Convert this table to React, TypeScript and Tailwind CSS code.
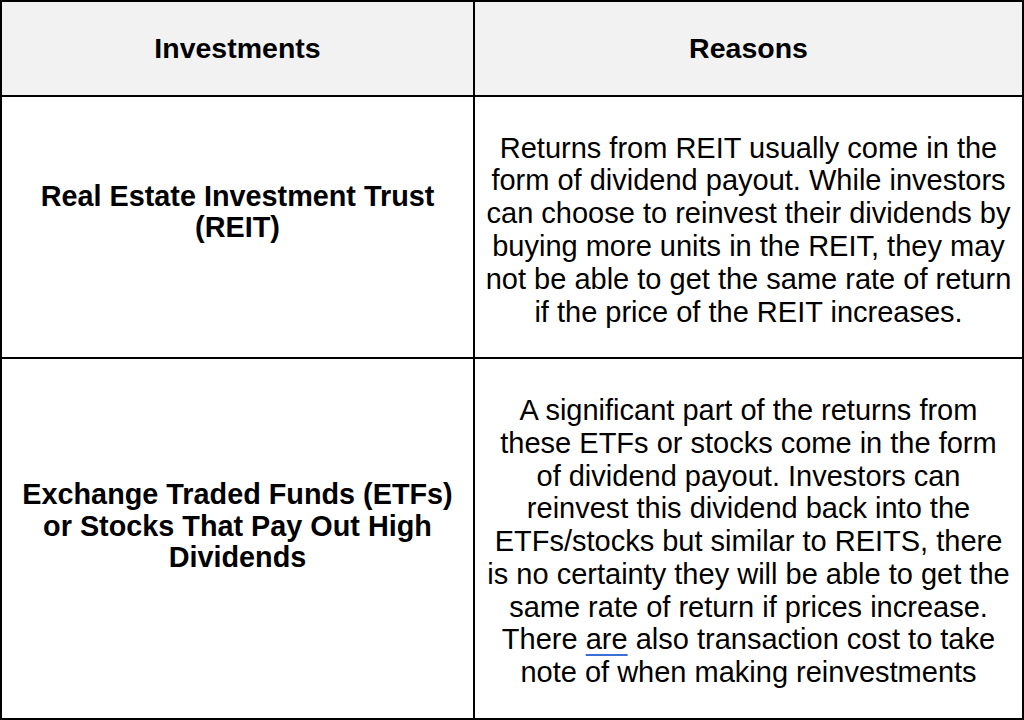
const rows = [
  {
    investment: ["Real Estate Investment Trust", "(REIT)"],
    reasons: [
      "Returns from REIT usually come in the",
      "form of dividend payout. While investors",
      "can choose to reinvest their dividends by",
      "buying more units in the REIT, they may",
      "not be able to get the same rate of return",
      "if the price of the REIT increases.",
    ],
    height: "h-[262px]",
    leftPad: "pb-[30px]",
  },
  {
    investment: ["Exchange Traded Funds (ETFs)", "or Stocks That Pay Out High", "Dividends"],
    reasons: [
      "A significant part of the returns from",
      "these ETFs or stocks come in the form",
      "of dividend payout. Investors can",
      "reinvest this dividend back into the",
      "ETFs/stocks but similar to REITS, there",
      "is no certainty they will be able to get the",
      "same rate of return if prices increase.",
      "__ARE__",
      "note of when making reinvestments",
    ],
    height: "flex-1",
    leftPad: "pb-[24px]",
  },
];

export default function App() {
  return (
    <div className="flex h-[720px] w-[1024px] flex-col border-2 border-black bg-white font-['Liberation_Sans',Arial,sans-serif] text-black">
      <div className="flex h-[95px] border-b-2 border-black bg-[#f2f2f2] text-[28.5px] font-bold">
        <div className="flex w-[473px] items-center justify-center border-r-2 border-black">
          Investments
        </div>
        <div className="flex flex-1 items-center justify-center">Reasons</div>
      </div>

      {rows.map((row, i) => (
        <div
          key={i}
          className={`flex ${row.height} ${i === 0 ? "border-b-2 border-black" : ""}`}
        >
          <div
            className={`flex w-[473px] flex-col items-center justify-center border-r-2 border-black text-center text-[28.8px] font-bold leading-[31.5px] ${row.leftPad}`}
          >
            {row.investment.map((line) => (
              <span key={line} className="whitespace-nowrap">
                {line}
              </span>
            ))}
          </div>
          <div className="flex flex-1 flex-col items-center justify-center pt-[6px] text-center text-[29px] leading-[32.8px]">
            {row.reasons.map((line) =>
              line === "__ARE__" ? (
                <span key={line} className="whitespace-nowrap">
                  There{" "}
                  <span className="underline decoration-[#3b6fd6] decoration-2 underline-offset-[5px]">
                    are
                  </span>{" "}
                  also transaction cost to take
                </span>
              ) : (
                <span key={line} className="whitespace-nowrap">
                  {line}
                </span>
              )
            )}
          </div>
        </div>
      ))}
    </div>
  );
}
